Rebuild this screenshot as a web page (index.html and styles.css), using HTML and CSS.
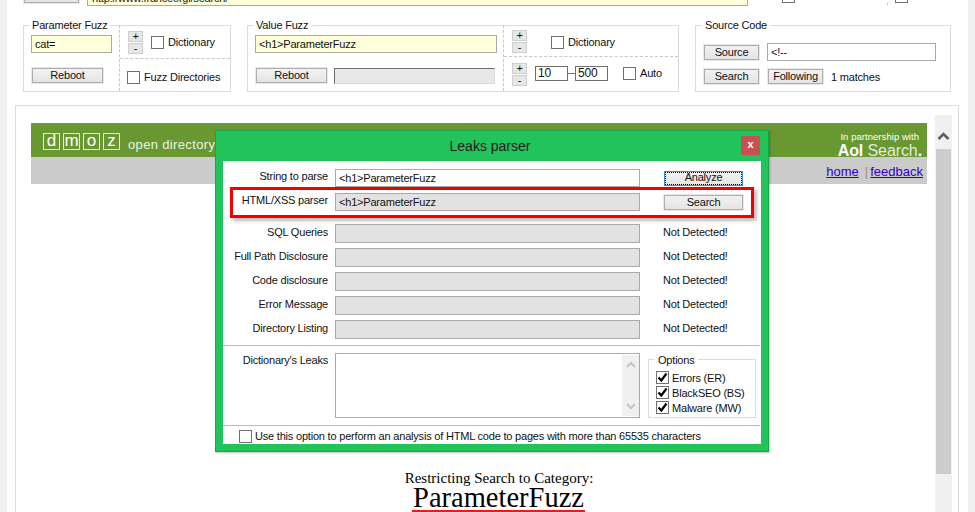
FILE: index.html
```html
<!DOCTYPE html>
<html lang="en">
<head>
<meta charset="utf-8">
<title>Leaks parser</title>
<link rel="stylesheet" href="styles.css">
</head>
<body>
<div class="app">
  <div class="toprow">
    <span class="btn top-btn"></span>
    <span class="field top-url">http://www.franceorgi/search/</span>
    <span class="top-box top-box-a"></span>
    <span class="top-sep"></span>
    <span class="top-box top-box-b"></span>
  </div>

  <div class="toolbar">
    <fieldset class="group group-param">
      <legend>Parameter Fuzz</legend>
      <div class="param-left">
        <span class="field yellow param-input">cat=</span>
        <span class="btn reboot">Reboot</span>
      </div>
      <div class="param-right">
        <div class="cell cell-top">
          <div class="steppers"><span class="step">+</span><span class="step">-</span></div>
          <label class="check"><span class="box"></span>Dictionary</label>
        </div>
        <div class="cell cell-bottom">
          <label class="check"><span class="box"></span>Fuzz Directories</label>
        </div>
      </div>
    </fieldset>

    <fieldset class="group group-value">
      <legend>Value Fuzz</legend>
      <div class="value-left">
        <span class="field yellow value-input">&lt;h1&gt;ParameterFuzz</span>
        <div class="value-actions">
          <span class="btn reboot">Reboot</span>
          <span class="progress"></span>
        </div>
      </div>
      <div class="value-right">
        <div class="vcell vcell-top">
          <div class="steppers"><span class="step">+</span><span class="step">-</span></div>
          <label class="check dict"><span class="box"></span>Dictionary</label>
        </div>
        <div class="vcell vcell-bottom">
          <div class="steppers"><span class="step">+</span><span class="step">-</span></div>
          <span class="num">10</span><span class="dash"></span><span class="num">500</span>
          <label class="check auto"><span class="box"></span>Auto</label>
        </div>
      </div>
    </fieldset>

    <fieldset class="group group-source">
      <legend>Source Code</legend>
      <div class="source-row first">
        <span class="btn src-btn">Source</span>
        <span class="field src-input">&lt;!--</span>
      </div>
      <div class="source-row">
        <span class="btn src-btn">Search</span>
        <span class="btn src-btn next">Following</span>
        <span class="matches">1 matches</span>
      </div>
    </fieldset>
  </div>

  <div class="panel">
    <div class="site">
      <div class="site-green">
        <div class="logo"><span>d</span><span>m</span><span>o</span><span>z</span></div>
        <span class="tagline">open directory</span>
        <div class="partner">
          <span class="partner-line">In partnership with</span>
          <span class="aol"><b>Aol</b> Search<b>.</b></span>
        </div>
      </div>
      <div class="site-gray">
        <a class="link" href="#">home</a><span class="pipe">|</span><a class="link" href="#">feedback</a>
      </div>
      <div class="result">
        <div class="result-sub">Restricting Search to Category:</div>
        <div class="result-title">ParameterFuzz</div>
      </div>
    </div>
    <div class="scrollbar">
      <div class="scroll-up">
        <svg width="13" height="8" viewBox="0 0 13 8"><path d="M1.5 7 L6.5 2 L11.5 7" fill="none" stroke="#5f5f5f" stroke-width="2.6"/></svg>
      </div>
      <div class="scroll-thumb"></div>
    </div>

    <section class="modal">
      <header class="modal-title">
        <span>Leaks parser</span>
        <span class="close">x</span>
      </header>
      <div class="modal-body">
        <div class="rows">
          <div class="row"><span class="lbl">String to parse</span><span class="field wide">&lt;h1&gt;ParameterFuzz</span><span class="btn act focus"><span class="focus-in">Analyze</span></span></div>
          <div class="row row-html"><span class="lbl">HTML/XSS parser</span><span class="field wide gray">&lt;h1&gt;ParameterFuzz</span><span class="btn act">Search</span></div>
          <div class="row row-sql"><span class="lbl">SQL Queries</span><span class="field wide gray"></span><span class="status">Not Detected!</span></div>
          <div class="row"><span class="lbl">Full Path Disclosure</span><span class="field wide gray"></span><span class="status">Not Detected!</span></div>
          <div class="row"><span class="lbl">Code disclosure</span><span class="field wide gray"></span><span class="status">Not Detected!</span></div>
          <div class="row"><span class="lbl">Error Message</span><span class="field wide gray"></span><span class="status">Not Detected!</span></div>
          <div class="row"><span class="lbl">Directory Listing</span><span class="field wide gray"></span><span class="status">Not Detected!</span></div>
        </div>
        <div class="leaks">
          <span class="lbl leaks-lbl">Dictionary's Leaks</span>
          <div class="textarea">
            <div class="ta-scroll">
              <svg width="10" height="7" viewBox="0 0 10 7"><path d="M1 6 L5 2 L9 6" fill="none" stroke="#c4c4c4" stroke-width="2"/></svg>
              <svg width="10" height="7" viewBox="0 0 10 7"><path d="M1 1 L5 5 L9 1" fill="none" stroke="#c4c4c4" stroke-width="2"/></svg>
            </div>
          </div>
          <fieldset class="options">
            <legend>Options</legend>
            <label class="check opt"><span class="box tick"><svg width="11" height="11" viewBox="0 0 11 11"><path d="M1.5 5.5 L4.3 8.5 L9.5 1.5" fill="none" stroke="#000" stroke-width="2.2"/></svg></span>Errors (ER)</label>
            <label class="check opt"><span class="box tick"><svg width="11" height="11" viewBox="0 0 11 11"><path d="M1.5 5.5 L4.3 8.5 L9.5 1.5" fill="none" stroke="#000" stroke-width="2.2"/></svg></span>BlackSEO (BS)</label>
            <label class="check opt"><span class="box tick"><svg width="11" height="11" viewBox="0 0 11 11"><path d="M1.5 5.5 L4.3 8.5 L9.5 1.5" fill="none" stroke="#000" stroke-width="2.2"/></svg></span>Malware (MW)</label>
          </fieldset>
        </div>
        <label class="check foot"><span class="box"></span>Use this option to perform an analysis of HTML code to pages with more than 65535 characters</label>
      </div>
      <div class="callout"></div>
    </section>
  </div>
</div>
</body>
</html>
```
FILE: styles.css
```css
* { box-sizing: border-box; }
html, body { margin: 0; height: 100%; overflow: hidden; }
body {
  background: #f0f0f0;
  font: 11px/14px "Liberation Sans", Arial, sans-serif;
  letter-spacing: -.2px;
  color: #111;
}
.app {
  margin-left: 7px;
  width: 961px;
  height: 512px;
  background: #fff;
  overflow: hidden;
}

/* shared controls */
.field {
  display: block;
  border: 1px solid #a9a9a9;
  background: #fff;
  padding: 0 3px;
  line-height: 16px;
  white-space: nowrap;
  overflow: hidden;
}
.yellow { background: #ffffd9; }
.gray { background: #e2e2e2; }
.btn {
  display: flex;
  align-items: center;
  justify-content: center;
  height: 15px;
  border: 1px solid #adadad;
  box-shadow: 0 0 0 1px #e8e8e8;
  background: linear-gradient(#f2f2f2, #e4e4e4);
  line-height: 13px;
}
.check { display: flex; align-items: center; white-space: nowrap; }
.box {
  flex: none;
  display: block;
  width: 13px;
  height: 13px;
  margin-right: 4px;
  border: 1px solid #707070;
  background: #fff;
}
.steppers { display: flex; flex-direction: column; gap: 1px; flex: none; }
.step {
  display: flex;
  align-items: center;
  justify-content: center;
  width: 15px;
  height: 11px;
  border: 1px solid #cfcfcf;
  background: #e6e6e6;
  font-size: 11px;
  line-height: 9px;
}

/* top strip */
.toprow { display: flex; align-items: flex-end; height: 6px; overflow: hidden; }
.top-btn { width: 55px; height: 20px; margin: 0 0 3px 17px; flex: none; }
.top-url { width: 661px; height: 20px; margin-left: 8px; background: #ffffd9; padding: 3px 4px; color: #222; flex: none; }
.top-box { display: block; width: 13px; height: 13px; border: 1px solid #707070; flex: none; }
.top-box-a { margin: 0 0 3px 34px; }
.top-sep { width: 0; height: 20px; margin: 0 0 -5px 92px; border-left: 1px dashed #c8c8c8; }
.top-box-b { margin: 0 0 3px 7px; }

/* toolbar groups */
.toolbar { display: flex; gap: 16px; padding: 13px 0 0 16px; height: 99px; align-items: flex-start; }
.group {
  position: relative;
  display: flex;
  margin: 6px 0 0;
  padding: 0;
  height: 67px;
  border: 1px solid #dcdcdc;
  border-top: 0;
  box-shadow: inset 0 1px 0 #dcdcdc;
}
.group legend {
  position: absolute;
  top: -7px;
  left: 6px;
  padding: 0 3px;
  background: #fff;
  line-height: 14px;
}
.group-param { width: 208px; }
.group-value { width: 432px; }
.group-source { width: 256px; flex-direction: column; padding: 18px 0 0 8px; }
.group-param legend { left: 5px; }
.group-value legend { left: 5px; }
.group-source legend { left: 6px; }

.param-left { width: 96px; padding: 10px 0 0 7px; border-right: 1px dashed #c8c8c8; flex: none; }
.param-input { width: 81px; height: 18px; }
.reboot { width: 71px; margin: 15px 0 0 1px; }
.param-right { flex: 1; display: flex; flex-direction: column; }
.cell-top { height: 34px; display: flex; align-items: flex-start; padding: 6px 0 0 8px; border-bottom: 1px dashed #c8c8c8; }
.cell-top .check { margin: 4px 0 0 8px; }
.cell-bottom { padding: 11px 0 0 7px; }

.value-left { width: 256px; padding: 10px 0 0 7px; border-right: 1px dashed #c8c8c8; flex: none; }
.value-input { width: 242px; height: 18px; }
.value-actions { display: flex; gap: 7px; }
.value-actions .reboot { margin: 15px 0 0 1px; }
.progress { width: 161px; height: 16px; margin-top: 15px; background: #e8e8e8; border: 1px solid #dcdcdc; border-top-color: #6e6e6e; border-left-color: #6e6e6e; }
.value-right { flex: 1; display: flex; flex-direction: column; }
.vcell { display: flex; padding-left: 8px; }
.vcell-top { height: 32px; padding-top: 5px; border-bottom: 1px dashed #c8c8c8; }
.dict { margin: 5px 0 0 24px; align-self: flex-start; }
.vcell-bottom { padding-top: 6px; align-items: flex-start; }
.num {
  width: 33px;
  height: 15px;
  margin-top: 3px;
  margin-left: 8px;
  padding-left: 2px;
  border: 1px solid #707070;
  line-height: 13px;
  font-size: 12px;
}
.num + .dash + .num { margin-left: 0; }
.dash { width: 7px; height: 1px; margin-top: 10px; background: #707070; }
.auto { margin: 3px 0 0 15px; }

.source-row { display: flex; align-items: center; gap: 8px; }
.source-row.first { margin-bottom: 8px; }
.src-btn { width: 55px; }
.next { margin-left: 1px; }
.src-input { width: 169px; height: 18px; }

/* browser panel */
.panel {
  position: relative;
  display: flex;
  gap: 8px;
  width: 944px;
  height: 420px;
  margin-left: 8px;
  padding: 9px 6px 0 15px;
  border: 1px solid #dcdcdc;
  border-bottom: 0;
}
.site { width: 896px; margin-top: 8px; font-family: "Liberation Serif", "Times New Roman", serif; letter-spacing: 0; }
.site-green {
  display: flex;
  align-items: flex-start;
  height: 34px;
  padding: 10px 5px 0 12px;
  background: #699833;
  color: #fff;
  font-family: "Liberation Sans", Arial, sans-serif;
}
.logo { display: flex; gap: 3px; }
.logo span {
  width: 17px;
  height: 17px;
  border: 1px solid #e6eedb;
  text-align: center;
  font-size: 17px;
  line-height: 14px;
}
.tagline { margin: 4px 0 0 8px; font-size: 13px; letter-spacing: .35px; line-height: 16px; color: #eef3e5; }
.partner { margin: -2px 0 0 auto; text-align: right; display: flex; flex-direction: column; }
.partner-line { font-size: 9.5px; line-height: 11px; padding-right: 3px; letter-spacing: .05px; }
.aol { font-size: 16px; line-height: 17px; letter-spacing: -.1px; color: #e3ecd7; }
.aol b { color: #fff; }
.site-gray {
  display: flex;
  justify-content: flex-end;
  align-items: center;
  height: 27px;
  padding: 2px 4px 0 0;
  background: #cbcbcb;
  font-family: "Liberation Sans", Arial, sans-serif;
  font-size: 13px;
}
.link { color: #2f00cc; }
.pipe { margin: 0 2px 0 6px; color: #b09070; }
.result { margin-top: 286px; text-align: center; color: #000; }
.result-sub { font-size: 15px; line-height: 16px; margin-left: 40px; }
.result-title {
  display: block;
  width: 173px;
  margin: 0 0 0 381px;
  text-align: center;
  font-size: 28.5px;
  line-height: 24px;
  border-bottom: 2px solid #f01818;
}
.scrollbar { width: 17px; height: 411px; background: #f0f0f0; }
.scroll-up { height: 34px; padding: 17px 0 0 2px; }
.scroll-up svg { display: block; }
.scroll-thumb { width: 15px; height: 325px; margin-left: 1px; background: #cdcdcd; }

/* modal */
.modal {
  position: absolute;
  left: 199px;
  top: 24px;
  width: 554px;
  height: 322px;
  padding: 0 7px 7px;
  background: #22c35a;
  border: 1px solid #1aa54a;
  box-shadow: 1px 1px 2px rgba(0,0,0,.25);
  display: flex;
  flex-direction: column;
}
.modal-title { position: relative; height: 30px; padding-right: 4px; text-align: center; font-size: 14px; line-height: 30px; letter-spacing: 0; color: #1c1c1c; flex: none; }
.close {
  position: absolute;
  right: 1px;
  top: 5px;
  width: 19px;
  height: 19px;
  background: #c75050;
  color: #fff;
  text-align: center;
  font-size: 11px;
  font-weight: bold;
  line-height: 16px;
}
.modal-body { flex: 1; background: #fff; position: relative; display: flex; flex-direction: column; }
.rows { display: flex; flex-direction: column; gap: 6px; padding: 8px 0 0; height: 185px; border-bottom: 1px solid #bdbdbd; width: 537px; flex: none; }
.row { display: grid; grid-template-columns: 105px 305px auto; column-gap: 7px; align-items: center; height: 18px; }
.lbl { text-align: right; white-space: nowrap; }
.row .lbl { padding-bottom: 4px; }
.wide { height: 18px; }
.act { width: 79px; margin-left: 17px; }
.focus { border-color: #2f8fe8; box-shadow: none; }
.focus-in { display: block; width: 75px; height: 11px; line-height: 9px; text-align: center; outline: 1px dotted #000; }
.status { margin-left: 16px; padding-bottom: 4px; white-space: nowrap; }
.rows .row:nth-child(n+3) { height: 19px; }
.rows .row:nth-child(n+3) .wide { height: 19px; }
.rows .row:nth-child(3) { margin-top: 7px; }
.rows .row:nth-child(n+4) { margin-top: -1px; }

.leaks { display: grid; grid-template-columns: 105px 305px 109px; column-gap: 7px; height: 80px; padding-top: 7px; border-bottom: 1px solid #bdbdbd; width: 537px; flex: none; }
.textarea { height: 65px; border: 1px solid #a9a9a9; display: flex; justify-content: flex-end; }
.ta-scroll { width: 17px; height: 61px; margin: 1px 0 0; background: #f0f0f0; display: flex; flex-direction: column; justify-content: space-between; align-items: center; padding: 6px 0; }
.ta-scroll svg { display: block; }
.options { position: relative; margin: 6px 0 0 1px; padding: 10px 0 0 7px; height: 59px; border: 1px solid #dcdcdc; }
.options legend { position: absolute; top: -7px; left: 6px; padding: 0 3px; background: #fff; }
.opt { height: 15px; }
.opt .box { margin-right: 3px; }
.tick { padding: 0; display: flex; align-items: center; justify-content: center; }
.foot { padding: 3px 0 0 16px; }
.foot .box { margin-right: 3px; }

.callout {
  position: absolute;
  left: 14px;
  top: 56px;
  width: 524px;
  height: 31px;
  border: 3px solid #f00000;
  box-shadow: 3px 3px 3px rgba(0,0,0,.25);
  pointer-events: none;
}
```
